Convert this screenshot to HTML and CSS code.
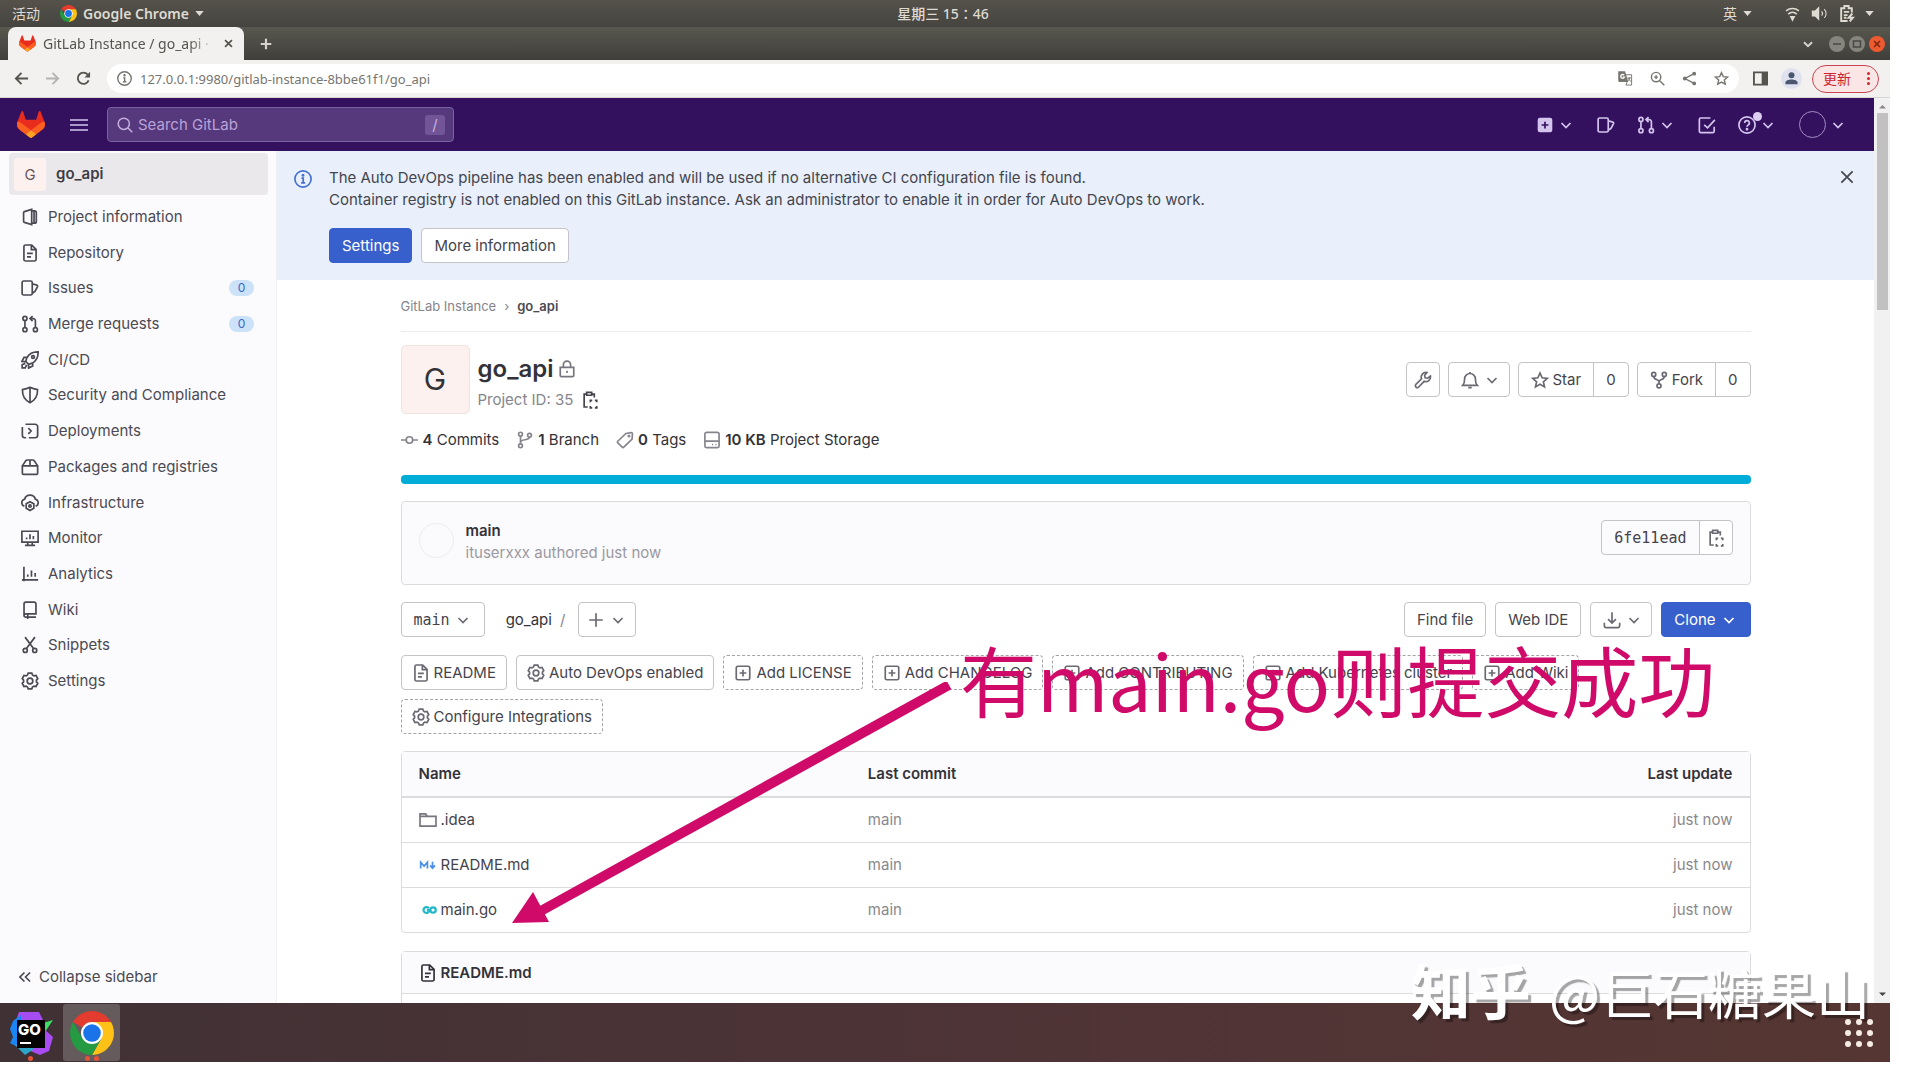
FILE: index.html
```
<!DOCTYPE html>
<html lang="zh-CN">

<head>
    <meta charset="utf-8">
    <meta name="viewport" content="width=device-width,initial-scale=1">
    <title>GitLab Instance / go_api</title>
    <link rel="stylesheet" href="styles.css">
</head>

<body>
    <!-- icon sprite -->
    <svg class="sprite" aria-hidden="true">
        <symbol id="chevron" viewBox="0 0 16 16"><path d="M4 6.2l4 4 4-4" /></symbol>
        <symbol id="close" viewBox="0 0 16 16"><path d="M3 3l10 10M13 3L3 13" /></symbol>
        <symbol id="caret" viewBox="0 0 10 6"><path d="M0 0h10L5 6z" fill="currentColor" stroke="none" /></symbol>
        <symbol id="info" viewBox="0 0 16 16"><circle cx="8" cy="8" r="7.2" /><path d="M6.6 7.3H8.2v4M6.3 11.4h3.6" /><circle cx="8" cy="4.6" r=".6" fill="currentColor" /></symbol>
        <symbol id="project" viewBox="0 0 16 16"><path d="M9.5 1.2L3 3.2a1 1 0 0 0-.7 1v7.6a1 1 0 0 0 .7 1l6.5 2zM9.5 2.5H12a1.6 1.6 0 0 1 1.6 1.6v7.8a1.6 1.6 0 0 1-1.6 1.6H9.5M11.6 2.6v10.8" /></symbol>
        <symbol id="doc" viewBox="0 0 16 16"><path d="M9.5.9H4A1.4 1.4 0 0 0 2.6 2.3v11.4A1.4 1.4 0 0 0 4 15.1h8a1.4 1.4 0 0 0 1.4-1.4V4.8zM9.2 1v4h4M5.3 8.4h5.2M5.3 11.4h3.6" /></symbol>
        <symbol id="issues" viewBox="0 0 16 16"><path d="M2.4 1.8h6.2A1.4 1.4 0 0 1 10 3.2v9.6a1.4 1.4 0 0 1-1.4 1.4H2.4A1.4 1.4 0 0 1 1 12.8V3.2a1.4 1.4 0 0 1 1.4-1.4zM10 4.2l4 1.2a1 1 0 0 1 .7 1.3L12.4 11 10 12.6" /></symbol>
        <symbol id="merge" viewBox="0 0 16 16"><circle cx="3.5" cy="3" r="1.8" /><circle cx="3.5" cy="13" r="1.8" /><circle cx="12.8" cy="13" r="1.8" /><path d="M3.5 5v6M8.4 3.2h2.4a2 2 0 0 1 2 2V11M10.3 1L8 3.2l2.3 2.2" /></symbol>
        <symbol id="rocket" viewBox="0 0 16 16"><path d="M15.2.8C10.5.6 7.6 2 5.2 6L4.2 9.2l2.6 2.6 3.2-1C14 8.4 15.4 5.5 15.2.8zM5.4 5.6H2.7L.8 9.2l3.3.2M10.4 10.6v2.7l-3.6 1.9-.2-3.3M3.8 11L1 12.2V15h2.8L5 12.2" /><circle cx="10.7" cy="5.3" r="1.2" /></symbol>
        <symbol id="shield" viewBox="0 0 16 16"><path d="M1.3 3.2C4 2.8 6 2.2 8 1.2c2 1 4 1.6 6.7 2C14.9 9 12.5 12.7 8 14.8 3.5 12.7 1.1 9 1.3 3.2zM8 1.5v13" /></symbol>
        <symbol id="deploy" viewBox="0 0 16 16"><path d="M4 2h8.6a2.200 2.200 0 0 1 2.200 2.200v7.600A2.200 2.200 0 0 1 12.600 14H7M1.200 4.500v7.300A2.200 2.200 0 0 0 3.400 14H4.500M6.500 5.500L9 8l-2.500 2.500" /></symbol>
        <symbol id="package" viewBox="0 0 16 16"><path d="M1.2 7h13.600v6.600a1 1 0 0 1-1 1H2.200a1 1 0 0 1-1-1zM1.200 7l3-4.500A1.500 1.500 0 0 1 5.500 1.800h5a1.500 1.500 0 0 1 1.300.7l3 4.500M8 2v5" /></symbol>
        <symbol id="infra" viewBox="0 0 16 16"><path d="M3 10.800A3.200 3.200 0 0 1 3.200 4.600 5 5 0 0 1 12.800 4.600 3.200 3.200 0 0 1 13 10.800M8 6.800l3.400 1.900v3.900L8 14.600l-3.400-2V8.700z" /><circle cx="8" cy="10.700" r="1" /></symbol>
        <symbol id="monitor" viewBox="0 0 16 16"><path d="M.8 2h14.400v9.600H.8zM3.500 14.500h9M6 12v2.500M10 12v2.500M5 9.200V7.600M8 9.200V4.600M11 9.200V6.200" /></symbol>
        <symbol id="chart" viewBox="0 0 16 16"><path d="M2.600 1.500v13M.8 13.200h14.400M6 10.500V8.500M9.300 10.500V4.800M12.600 10.500V7" /></symbol>
        <symbol id="book" viewBox="0 0 16 16"><path d="M13.300 11.500H4.200a1.500 1.500 0 0 0-1.500 1.500V2.600A1.600 1.600 0 0 1 4.300 1h7.400a1.600 1.600 0 0 1 1.600 1.600zM2.700 13a1.400 1.400 0 0 0 1.500 1.300h9.100M6 11.500V16" /></symbol>
        <symbol id="snippet" viewBox="0 0 16 16"><circle cx="3.800" cy="12.800" r="1.800" /><circle cx="12.200" cy="12.800" r="1.800" /><path d="M3.600 1l7.700 10.300M12.400 1L4.700 11.300" /></symbol>
        <symbol id="gear" viewBox="0 0 16 16"><path d="M6.400 1h3.200l.6 1.700 1.300.8 1.900-.4 1.500 2.700L13.700 7.200v1.600l1.200 1.400-1.500 2.700-1.900-.4-1.300.8L9.600 15H6.400l-.6-1.700-1.300-.8-1.900.4-1.500-2.700L2.300 8.800V7.200L1.100 5.800l1.500-2.700 1.900.4 1.300-.8z" /><circle cx="8" cy="8" r="2.500" /></symbol>
        <symbol id="lock" viewBox="0 0 16 16"><path d="M2 6.500h12v7.300a1 1 0 0 1-1 1H3a1 1 0 0 1-1-1zM4.800 6.300V4.200a3.200 3.200 0 0 1 6.400 0v2.100M8 9.500v2" /></symbol>
        <symbol id="copy" viewBox="0 0 16 16"><path d="M5 2.700H2.800v11.500H6M9.500 2.700h2.300v3M5 1.200h4.500v2.600H5zM8.300 10V8.300H10M12.300 8.300H14V10M14 13.300V15h-1.700M10 15H8.300v-1.700" /></symbol>
        <symbol id="commit" viewBox="0 0 16 16"><circle cx="7.500" cy="8" r="2.900" /><path d="M0 8h4.500M10.500 8H15" /></symbol>
        <symbol id="branch" viewBox="0 0 16 16"><circle cx="4" cy="2.800" r="1.700" /><circle cx="4" cy="13.200" r="1.700" /><circle cx="12" cy="3.800" r="1.700" /><path d="M4 4.500v7M12 5.500c0 3-8 1.500-8 4.500" /></symbol>
        <symbol id="tag" viewBox="0 0 16 16"><path d="M8.800 2.200l4.700-.8a1 1 0 0 1 1.100 1l-.3 4.800-7.400 7.200a1 1 0 0 1-1.400 0L1.600 10.500a1 1 0 0 1 0-1.400z" /><circle cx="11.500" cy="4.500" r=".6" /></symbol>
        <symbol id="disk" viewBox="0 0 16 16"><path d="M3 1.200h10A1.400 1.400 0 0 1 14.300 2.600v10.800a1.400 1.400 0 0 1-1.300 1.400H3a1.400 1.400 0 0 1-1.300-1.400V2.600A1.400 1.400 0 0 1 3 1.200zM1.700 9h12.600M8 12h1M11 12h1" /></symbol>
        <symbol id="wrench" viewBox="0 0 16 16"><path d="M14.600 4.500A4.200 4.200 0 0 1 9 9.200l-4.800 5a1.700 1.700 0 0 1-2.500-2.400l5-4.800A4.200 4.200 0 0 1 11.500 1.400L9.500 3.800l.4 2.300 2.300.3z" /></symbol>
        <symbol id="bell" viewBox="0 0 16 16"><path d="M1.500 12.800h13C13.300 11.500 12.800 10 12.800 7a4.800 4.800 0 0 0-9.600 0c0 3-.5 4.500-1.700 5.800zM6.500 14.800h3M8 .8v1.400" /></symbol>
        <symbol id="star" viewBox="0 0 16 16"><path d="M8 1.800l1.900 4.200 4.600.5-3.500 3.100 1 4.500L8 11.800l-4 2.300 1-4.500L1.500 6.500l4.600-.5z" /></symbol>
        <symbol id="fork" viewBox="0 0 16 16"><circle cx="3.300" cy="3" r="1.800" /><circle cx="12.700" cy="3" r="1.800" /><circle cx="8" cy="13.200" r="1.800" /><path d="M3.300 5c0 3 4.700 2 4.700 4.500M12.700 5c0 3-4.700 2-4.700 4.500v2" /></symbol>
        <symbol id="download" viewBox="0 0 16 16"><path d="M8 1v9.500M4.500 7.300L8 10.800l3.500-3.500M1.200 10.500v2.800a1.400 1.400 0 0 0 1.400 1.400h10.800a1.400 1.400 0 0 0 1.400-1.400v-2.800" /></symbol>
        <symbol id="plus" viewBox="0 0 16 16"><path d="M8 2v12M2 8h12" /></symbol>
        <symbol id="plus-box" viewBox="0 0 16 16"><rect x="2" y="2" width="12" height="12" rx="1.500" /><path d="M8 5v6M5 8h6" /></symbol>
        <symbol id="folder" viewBox="0 0 16 16"><path d="M.9 13.500V2.500h5l1.500 2.300h7.700v8.700zM1 4.800h6.500" /></symbol>
        <symbol id="todo" viewBox="0 0 16 16"><path d="M11 1.800H2.400A1.200 1.200 0 0 0 1.200 3v10.500a1.200 1.200 0 0 0 1.200 1.200h10.800a1.200 1.200 0 0 0 1.200-1.200V9.500M5.500 7.800L8.500 10.500l6.500-7" /></symbol>
        <symbol id="help" viewBox="0 0 16 16"><circle cx="8" cy="8" r="7.200" /><path d="M5.900 6.200a2.100 2.100 0 1 1 3 1.900c-.7.400-.9.700-.9 1.500" /><circle cx="8" cy="11.800" r=".5" fill="currentColor" /></symbol>
        <symbol id="search" viewBox="0 0 16 16"><circle cx="6.800" cy="6.800" r="5.600" /><path d="M11 11l4.300 4.300" /></symbol>
        <symbol id="gitlab" viewBox="0 0 25 24">
            <g stroke="none">
                <path d="m24.507 9.500-.034-.090L21.082.562a.896.896 0 0 0-1.694.091l-2.290 7.010H7.825L5.535.653a.898.898 0 0 0-1.694-.090L.451 9.411.416 9.500a6.297 6.297 0 0 0 2.090 7.278l.012.010.030.022 5.160 3.867 2.560 1.935 1.554 1.176a1.051 1.051 0 0 0 1.268 0l1.555-1.176 2.560-1.935 5.197-3.890.014-.010A6.297 6.297 0 0 0 24.507 9.500Z" fill="#e82c1e" />
                <path d="m24.507 9.500-.034-.090a11.440 11.440 0 0 0-4.560 2.051l-7.447 5.632 4.742 3.584 5.197-3.890.014-.010A6.297 6.297 0 0 0 24.507 9.500Z" fill="#fc6021" />
                <path d="m7.707 20.677 2.560 1.935 1.555 1.176a1.051 1.051 0 0 0 1.268 0l1.555-1.176 2.560-1.935-4.743-3.584-4.755 3.584Z" fill="#fca326" />
                <path d="M5.010 11.461a11.430 11.430 0 0 0-4.560-2.050L.416 9.500a6.297 6.297 0 0 0 2.090 7.278l.012.010.030.022 5.160 3.867 4.745-3.584-7.444-5.632Z" fill="#fc6021" />
            </g>
        </symbol>
        <symbol id="chrome" viewBox="0 0 44 44">
            <g stroke="none">
                <path d="M22 22L3 11A22 22 0 0 1 41 11z" fill="#e33b2e" />
                <path d="M22 11H41A22 22 0 0 1 22 44L31.500 27.500z" fill="#fdc117" />
                <path d="M3 11L12.500 27.500 22 33l9-5L22 44A22 22 0 0 1 3 11z" fill="#249a42" />
                <circle cx="22" cy="22" r="11" fill="#fff" />
                <circle cx="22" cy="22" r="8.800" fill="#1a73e8" />
            </g>
        </symbol>
    </svg>

    <div class="desktop">
        <header class="topbar">
            <div class="topbar-side">
                <span class="activities">活动</span>
                <button class="app-menu"><svg class="app-icon"><use href="#chrome" /></svg>Google Chrome<svg class="caret"><use href="#caret" /></svg></button>
            </div>
            <span class="clock">星期三 15∶46</span>
            <div class="topbar-side tray">
                <button class="lang">英<svg class="caret"><use href="#caret" /></svg></button>
                <svg class="tray-icon" viewBox="0 0 16 16"><path d="M2 5.500a9.500 9.500 0 0 1 12 0M4 8.500a6 6 0 0 1 8 0" /><path d="M6.500 11h3L8 14z" fill="currentColor" /></svg>
                <svg class="tray-icon" viewBox="0 0 16 16"><path d="M1.500 6h2.500l3-3v10L4 10H1.500z" fill="currentColor" /><path d="M10 6a3 3 0 0 1 0 4M12.500 3.800a6 6 0 0 1 0 8.400" stroke-width="1" /></svg>
                <svg class="tray-icon" viewBox="0 0 16 16"><path d="M13 7V3H10V1H6v2H3v12h6M5.500 6.500h5M5.500 9.500H9M5.500 12H8M13.500 8L10 12h4l-3 3.500" stroke-width="1.800" /></svg>
                <svg class="caret"><use href="#caret" /></svg>
            </div>
        </header>

        <div class="tabstrip">
            <div class="tab">
                <svg class="tab-icon"><use href="#gitlab" /></svg>
                <span class="tab-title">GitLab Instance / go_api ·</span>
                <button class="tab-close" aria-label="Close tab"><svg><use href="#close" /></svg></button>
            </div>
            <button class="new-tab" aria-label="New tab"><svg><use href="#plus" /></svg></button>
            <div class="window-controls">
                <svg class="tab-search"><use href="#chevron" /></svg>
                <button class="win-btn" aria-label="Minimize"><svg viewBox="0 0 16 16"><path d="M4 8h8" /></svg></button>
                <button class="win-btn" aria-label="Maximize"><svg viewBox="0 0 16 16"><path d="M4.500 5h7v6h-7z" /></svg></button>
                <button class="win-btn win-close" aria-label="Close"><svg viewBox="0 0 16 16"><path d="M5 5l6 6M11 5l-6 6" /></svg></button>
            </div>
        </div>

        <div class="toolbar">
            <button class="tool" aria-label="Back"><svg viewBox="0 0 16 16"><path d="M15 8H2M8 2L2 8l6 6" /></svg></button>
            <button class="tool off" aria-label="Forward"><svg viewBox="0 0 16 16"><path d="M1 8h13M8 2l6 6-6 6" /></svg></button>
            <button class="tool" aria-label="Reload"><svg viewBox="0 0 16 16"><path d="M13.500 10A6 6 0 1 1 12.500 3.800" /><path d="M15 .8v6H9z" fill="currentColor" stroke="none" /></svg></button>
            <div class="omnibox">
                <svg class="site-info"><use href="#info" /></svg>
                <input type="text" aria-label="Address" value="127.0.0.1:9980/gitlab-instance-8bbe61f1/go_api">
                <svg viewBox="0 0 16 16"><path d="M1 1h6l3 10H2a1 1 0 0 1-1-1z" fill="currentColor" /><path d="M8 4h6.500v11H8.500L10 11M10 7.500h4M12 6.500v1c0 2-1 3-2 3.500M11 8l3 3.500" stroke-width="1" /><path d="M6.500 4.500A2 2 0 1 0 6.800 6.500H5.300" stroke="#fff" /></svg>
                <svg viewBox="0 0 16 16"><circle cx="6.500" cy="6.500" r="5" /><path d="M10.300 10.300l5 5M6.500 4.500v4M4.500 6.500h4" /></svg>
                <svg viewBox="0 0 16 16"><g fill="currentColor"><circle cx="3" cy="8" r="1.300" /><circle cx="13" cy="2.800" r="1.300" /><circle cx="13" cy="13.200" r="1.300" /></g><path d="M13 2.800L3 8l10 5.200" /></svg>
                <svg><use href="#star" /></svg>
            </div>
            <svg class="panel-icon" viewBox="0 0 16 16"><path d="M1 1.500h14v13H1z" stroke-width="2" /><path d="M10 2h5v12h-5z" fill="currentColor" /></svg>
            <span class="profile"><svg viewBox="0 0 16 16"><g fill="currentColor" stroke="none"><circle cx="8" cy="4.500" r="3.200" /><path d="M1.500 14v-1.500C1.500 10 5 9 8 9s6.500 1 6.500 3.500V14z" /></g></svg></span>
            <button class="update">更新<span class="dots"><i></i><i></i><i></i></span></button>
        </div>

        <div class="viewport">
            <div class="page">
                <nav class="navbar">
                    <a href="#" class="brand" aria-label="GitLab"><svg><use href="#gitlab" /></svg></a>
                    <button class="burger" aria-label="Menu"><svg viewBox="0 0 18 16"><path d="M0 3h18M0 8h18M0 13h18" /></svg></button>
                    <label class="search">
                        <svg><use href="#search" /></svg>
                        <input type="text" placeholder="Search GitLab" aria-label="Search GitLab">
                        <kbd>/</kbd>
                    </label>
                    <div class="nav-actions">
                        <button aria-label="Create new"><svg viewBox="0 0 16 16"><rect x="1.500" y="1.500" width="13" height="13" rx="2" fill="currentColor" stroke="none" /><path d="M8 5v6M5 8h6" stroke="#33115f" /></svg><svg class="chev"><use href="#chevron" /></svg></button>
                        <button aria-label="Issues"><svg><use href="#issues" /></svg></button>
                        <button aria-label="Merge requests"><svg><use href="#merge" /></svg><svg class="chev"><use href="#chevron" /></svg></button>
                        <button aria-label="To-Do List"><svg><use href="#todo" /></svg></button>
                        <button class="help" aria-label="Help"><svg><use href="#help" /></svg><svg class="chev"><use href="#chevron" /></svg></button>
                        <button aria-label="Account"><span class="user"></span><svg class="chev"><use href="#chevron" /></svg></button>
                    </div>
                </nav>

                <div class="columns">
                    <aside class="sidebar">
                        <a href="#" class="context"><span class="avatar-small">G</span>go_api</a>
                        <ul class="menu">
                            <li><a href="#"><svg><use href="#project" /></svg>Project information</a></li>
                            <li><a href="#"><svg><use href="#doc" /></svg>Repository</a></li>
                            <li><a href="#"><svg><use href="#issues" /></svg>Issues<span class="badge">0</span></a></li>
                            <li><a href="#"><svg><use href="#merge" /></svg>Merge requests<span class="badge">0</span></a></li>
                            <li><a href="#"><svg><use href="#rocket" /></svg>CI/CD</a></li>
                            <li><a href="#"><svg><use href="#shield" /></svg>Security and Compliance</a></li>
                            <li><a href="#"><svg><use href="#deploy" /></svg>Deployments</a></li>
                            <li><a href="#"><svg><use href="#package" /></svg>Packages and registries</a></li>
                            <li><a href="#"><svg><use href="#infra" /></svg>Infrastructure</a></li>
                            <li><a href="#"><svg><use href="#monitor" /></svg>Monitor</a></li>
                            <li><a href="#"><svg><use href="#chart" /></svg>Analytics</a></li>
                            <li><a href="#"><svg><use href="#book" /></svg>Wiki</a></li>
                            <li><a href="#"><svg><use href="#snippet" /></svg>Snippets</a></li>
                            <li><a href="#"><svg><use href="#gear" /></svg>Settings</a></li>
                        </ul>
                        <button class="collapse"><svg viewBox="0 0 16 16"><path d="M7.500 4L3.500 8l4 4M12.500 4l-4 4 4 4" /></svg>Collapse sidebar</button>
                    </aside>

                    <main class="main">
                        <section class="alert">
                            <svg class="alert-icon"><use href="#info" /></svg>
                            <div class="alert-body">
                                <p>The Auto DevOps pipeline has been enabled and will be used if no alternative CI configuration file is found.<br>Container registry is not enabled on this GitLab instance. Ask an administrator to enable it in order for Auto DevOps to work.</p>
                                <div class="alert-actions">
                                    <button class="btn btn-primary">Settings</button>
                                    <button class="btn">More information</button>
                                </div>
                            </div>
                            <button class="alert-close" aria-label="Dismiss"><svg><use href="#close" /></svg></button>
                        </section>

                        <div class="container">
                            <div class="breadcrumb"><a href="#">GitLab Instance</a><span class="sep">›</span><a href="#" class="current">go_api</a></div>

                            <div class="project">
                                <span class="avatar">G</span>
                                <div class="project-name">
                                    <h1>go_api<svg><use href="#lock" /></svg></h1>
                                    <p>Project ID: 35<svg><use href="#copy" /></svg></p>
                                </div>
                                <div class="project-actions">
                                    <button class="btn btn-icon" aria-label="Admin"><svg><use href="#wrench" /></svg></button>
                                    <button class="btn btn-menu" aria-label="Notifications"><svg><use href="#bell" /></svg><svg class="chev"><use href="#chevron" /></svg></button>
                                    <div class="group"><button class="btn"><svg><use href="#star" /></svg>Star</button><a href="#" class="btn">0</a></div>
                                    <div class="group"><button class="btn"><svg><use href="#fork" /></svg>Fork</button><a href="#" class="btn">0</a></div>
                                </div>
                            </div>

                            <div class="stats">
                                <a href="#"><svg><use href="#commit" /></svg><span><b>4</b> Commits</span></a>
                                <a href="#"><svg><use href="#branch" /></svg><span><b>1</b> Branch</span></a>
                                <a href="#"><svg><use href="#tag" /></svg><span><b>0</b> Tags</span></a>
                                <a href="#"><svg><use href="#disk" /></svg><span><b>10 KB</b> Project Storage</span></a>
                            </div>

                            <div class="lang-bar"></div>

                            <div class="commit">
                                <span class="commit-avatar"></span>
                                <div class="commit-text">
                                    <a href="#">main</a>
                                    <p>ituserxxx authored just now</p>
                                </div>
                                <div class="group sha"><span class="btn">6fe11ead</span><button class="btn" aria-label="Copy commit SHA"><svg><use href="#copy" /></svg></button></div>
                            </div>

                            <div class="tree-nav">
                                <button class="btn mono">main<svg class="chev"><use href="#chevron" /></svg></button>
                                <a href="#" class="path">go_api</a><span class="slash">/</span>
                                <button class="btn btn-add" aria-label="Add to tree"><svg><use href="#plus" /></svg><svg class="chev"><use href="#chevron" /></svg></button>
                                <div class="tree-actions">
                                    <button class="btn">Find file</button>
                                    <button class="btn">Web IDE</button>
                                    <button class="btn btn-menu" aria-label="Download"><svg><use href="#download" /></svg><svg class="chev"><use href="#chevron" /></svg></button>
                                    <button class="btn btn-primary">Clone<svg class="chev"><use href="#chevron" /></svg></button>
                                </div>
                            </div>

                            <div class="chips">
                                <a href="#" class="btn"><svg><use href="#doc" /></svg>README</a>
                                <a href="#" class="btn"><svg><use href="#gear" /></svg>Auto DevOps enabled</a>
                                <a href="#" class="btn dashed"><svg><use href="#plus-box" /></svg>Add LICENSE</a>
                                <a href="#" class="btn dashed"><svg><use href="#plus-box" /></svg>Add CHANGELOG</a>
                                <a href="#" class="btn dashed"><svg><use href="#plus-box" /></svg>Add CONTRIBUTING</a>
                                <a href="#" class="btn dashed"><svg><use href="#plus-box" /></svg>Add Kubernetes cluster</a>
                                <a href="#" class="btn dashed"><svg><use href="#plus-box" /></svg>Add Wiki</a>
                                <a href="#" class="btn dashed"><svg><use href="#gear" /></svg>Configure Integrations</a>
                            </div>

                            <div class="files">
                                <table>
                                    <thead>
                                        <tr>
                                            <th>Name</th>
                                            <th>Last commit</th>
                                            <th>Last update</th>
                                        </tr>
                                    </thead>
                                    <tbody>
                                        <tr>
                                            <td><a href="#"><svg><use href="#folder" /></svg>.idea</a></td>
                                            <td>main</td>
                                            <td>just now</td>
                                        </tr>
                                        <tr>
                                            <td><a href="#"><svg class="md" viewBox="0 0 16 16"><path d="M1.500 11V5.500L4.500 9l3-3.500V11M12 5v5M9.800 8.300L12 10.800l2.200-2.500" /></svg>README.md</a></td>
                                            <td>main</td>
                                            <td>just now</td>
                                        </tr>
                                        <tr>
                                            <td><a href="#"><svg class="go" viewBox="0 0 16 16"><path d="M8.800 6.600A2.600 2.600 0 1 0 9 9V8H7" /><circle cx="12.500" cy="8" r="2.400" /></svg>main.go</a></td>
                                            <td>main</td>
                                            <td>just now</td>
                                        </tr>
                                    </tbody>
                                </table>
                            </div>

                            <div class="readme">
                                <div class="readme-title"><svg><use href="#doc" /></svg>README.md</div>
                            </div>
                        </div>
                    </main>
                </div>
            </div>
            <div class="scrollbar">
                <svg viewBox="0 0 10 6"><path d="M0 6h10L5 1z" /></svg>
                <div class="thumb"></div>
                <svg class="down" viewBox="0 0 10 6"><path d="M0 0h10L5 5z" /></svg>
            </div>
        </div>

        <footer class="dock">
            <button class="dock-app" aria-label="GoLand">
                <svg viewBox="0 0 44 44">
                    <path d="M10 1h20l6 12-14 12L4 18z" fill="#a54df0" />
                    <path d="M4 10l8-6v34L1 32l3-6-3-8z" fill="#1b86f3" />
                    <path d="M44 9L34 24l-3-11z" fill="#3ddc68" />
                    <path d="M34 17l10 9-4 14-9 4-12-5 6-8z" fill="#a94bf2" />
                    <path d="M6 34l14-2 5 6-9 6z" fill="#2ea6c9" />
                    <path d="M8 9h28v28H8z" fill="#050505" />
                    <path d="M11 32h11" stroke="#fff" stroke-width="2" />
                    <text x="9" y="24" class="go-text">GO</text>
                </svg>
                <span class="running"><i></i></span>
            </button>
            <button class="dock-app active" aria-label="Google Chrome">
                <svg><use href="#chrome" /></svg>
                <span class="running"><i></i><i></i></span>
            </button>
            <button class="apps" aria-label="Show applications"><svg viewBox="0 0 28 28"><path d="M3 3h.01M14 3h.01M25 3h.01M3 14h.01M14 14h.01M25 14h.01M3 25h.01M14 25h.01M25 25h.01" /></svg></button>
        </footer>

        <!-- annotation over the page -->
        <svg class="arrow" viewBox="0 0 440 242"><path d="M437 3L27 230" /><path d="M0 241L21 210 37 240z" class="arrow-head" /></svg>
        <div class="note">有main.go则提交成功</div>
        <div class="watermark"><b>知乎</b> @巨石糖果山</div>
    </div>
</body>

</html>
```
FILE: styles.css
```
* {
    margin: 0;
    padding: 0;
    box-sizing: border-box;
}

body {
    font-family: Inter, "Noto Sans CJK SC", sans-serif;
    font-size: 15px;
    line-height: 22px;
    color: #333238;
    background: #fff;
}

button,
input {
    font: inherit;
    color: inherit;
    background: none;
    border: none;
    outline: none;
}

a {
    color: inherit;
    text-decoration: none;
}

ul {
    list-style: none;
}

svg {
    width: 18px;
    height: 18px;
    flex: none;
    fill: none;
    stroke: currentColor;
    stroke-width: 1.5;
}

.sprite {
    display: none;
}

.desktop {
    position: relative;
    display: flex;
    flex-direction: column;
    height: calc(100vh - 13px);
    margin-right: 30px;
    overflow: hidden;
}

/* system bar */
.topbar {
    display: flex;
    align-items: center;
    height: 27px;
    padding: 0 16px 0 12px;
    color: #dfdbd2;
    font-family: "Noto Sans", "Noto Sans CJK SC", sans-serif;
    font-size: 14px;
    background: linear-gradient(#55524a, #454440);
}

.topbar-side {
    flex: 1;
    display: flex;
    align-items: center;
    gap: 20px;
}

.topbar button {
    display: flex;
    align-items: center;
    gap: 6px;
}

.app-menu {
    font-weight: 600;
}

.app-icon {
    width: 17px;
    height: 17px;
}

.caret {
    width: 9px;
    height: 5px;
}

.clock {
    font-weight: 500;
}

.tray {
    justify-content: flex-end;
    gap: 10px;
}

.topbar .lang {
    margin-right: 22px;
}

.tray-icon {
    width: 17px;
    height: 17px;
}

/* browser chrome */
.tabstrip {
    display: flex;
    align-items: center;
    height: 33px;
    padding: 0 5px 0 8px;
    color: #d5d3cc;
    font-family: "Noto Sans", sans-serif;
    font-size: 14px;
    background: linear-gradient(#59584e, #3f3e3a);
}

.tab {
    display: flex;
    align-items: center;
    align-self: stretch;
    width: 236px;
    padding: 0 10px 0 11px;
    color: #55544f;
    background: #f2f1f0;
    border-radius: 8px 8px 0 0;
}

.tab-icon {
    width: 17px;
    height: 17px;
    margin-right: 7px;
}

.tab-title {
    flex: 1;
    overflow: hidden;
    white-space: nowrap;
    mask-image: linear-gradient(90deg, #000 85%, transparent);
}

.tab-close {
    display: flex;
    margin-left: 8px;
}

.tab-close svg {
    width: 11px;
    height: 11px;
    stroke-width: 2.5;
}

.new-tab {
    display: flex;
    margin-left: 15px;
}

.new-tab svg {
    width: 14px;
    height: 14px;
    stroke-width: 2.5;
}

.window-controls {
    display: flex;
    align-items: center;
    gap: 4px;
    margin-left: auto;
}

.window-controls svg {
    width: 16px;
    height: 16px;
}

.tab-search {
    margin-right: 9px;
    stroke-width: 2;
}

.win-btn {
    display: flex;
    border-radius: 50%;
    color: #4a4945;
    background: #85847d;
}

.win-close {
    color: #7b2510;
    background: #ee5a30;
}

.toolbar {
    display: flex;
    align-items: center;
    height: 38px;
    padding: 0 11px 0 14px;
    color: #55544f;
    background: #f2f1f0;
    border-bottom: 1px solid #d8d6d3;
    font-family: "Noto Sans", "Noto Sans CJK SC", sans-serif;
    font-size: 14px;
}

.tool {
    display: flex;
    margin-right: 16px;
}

.tool svg {
    width: 15px;
    height: 15px;
    stroke-width: 2;
}

.tool.off {
    color: #b5b3b0;
}

.omnibox {
    flex: 1;
    display: flex;
    align-items: center;
    gap: 17px;
    height: 29px;
    margin-right: 14px;
    padding: 0 10px;
    color: #77756f;
    background: #fff;
    border-radius: 15px;
}

.omnibox svg {
    width: 15px;
    height: 15px;
}

.omnibox .site-info {
    margin-right: -9px;
}

.omnibox input {
    flex: 1;
    min-width: 0;
    font-size: 13px;
}

.panel-icon {
    width: 15px;
    height: 15px;
    margin-right: 13px;
}

.profile {
    display: flex;
    padding: 3px;
    color: #4a5670;
    background: #dfe2ee;
    border-radius: 50%;
    margin-right: 10px;
}

.profile svg {
    width: 15px;
    height: 15px;
}

.update {
    display: flex;
    align-items: center;
    gap: 16px;
    height: 28px;
    padding: 0 8px 0 10px;
    color: #cc2430;
    background: #fbe6e6;
    border: 1px solid #cc4450;
    border-radius: 14px;
}

.dots {
    display: grid;
    gap: 2px;
}

.dots i {
    width: 3px;
    height: 3px;
    border-radius: 50%;
    background: #cc2430;
}

/* page area */
.viewport {
    flex: 1;
    display: flex;
    min-height: 0;
}

.page {
    flex: 1;
    display: flex;
    flex-direction: column;
    min-width: 0;
}

.scrollbar {
    display: flex;
    flex-direction: column;
    align-items: center;
    width: 16px;
    padding: 6px 0;
    background: #f1f1f1;
}

.scrollbar svg {
    width: 7px;
    height: 5px;
    fill: #8a8a8a;
    stroke: none;
}

.scrollbar .thumb {
    width: 11px;
    height: 197px;
    margin-top: 4px;
    background: #c1c1c1;
}

.scrollbar .down {
    margin-top: auto;
    fill: #444;
}

.navbar {
    display: flex;
    align-items: center;
    height: 53px;
    padding: 0 27px 0 17px;
    color: #d4c5ee;
    background: #33115f;
    flex: none;
}

.brand {
    display: flex;
}

.brand svg {
    width: 28px;
    height: 27px;
}

.burger {
    display: flex;
    margin: 0 19px 0 25px;
}

.search {
    display: flex;
    align-items: center;
    gap: 5px;
    width: 347px;
    height: 35px;
    padding: 0 8px 0 9px;
    color: #c5b0e0;
    background: #56387d;
    border: 1px solid #7a61a0;
    border-radius: 4px;
}

.search svg {
    width: 16px;
    height: 16px;
}

.search input {
    flex: 1;
    min-width: 0;
}

.search input::placeholder {
    color: #b9a3d6;
}

.search kbd {
    width: 20px;
    height: 20px;
    line-height: 20px;
    text-align: center;
    font-family: inherit;
    background: #725596;
    border-radius: 3px;
}

.nav-actions {
    display: flex;
    align-items: center;
    gap: 22px;
    margin-left: auto;
}

.nav-actions button {
    position: relative;
    display: flex;
    align-items: center;
    gap: 3px;
}

.help::after {
    content: "";
    position: absolute;
    top: -4px;
    left: 15px;
    width: 9px;
    height: 9px;
    border-radius: 50%;
    background: #dccff2;
}

.user {
    width: 27px;
    height: 27px;
    border: 1px solid #a48fc4;
    border-radius: 50%;
}

.columns {
    flex: 1;
    display: flex;
    min-height: 0;
}

/* sidebar */
.sidebar {
    display: flex;
    flex-direction: column;
    width: 277px;
    padding: 2px 8px 0 9px;
    color: #4b4a52;
    background: #fbfafd;
    border-right: 1px solid #f0eff3;
}

.context {
    display: flex;
    align-items: center;
    gap: 10px;
    height: 42px;
    padding: 0 5px;
    font-weight: 600;
    color: #3d3c44;
    background: #eae8eb;
    border-radius: 4px;
}

.avatar-small {
    width: 32px;
    height: 33px;
    line-height: 33px;
    text-align: center;
    font-weight: 400;
    color: #66555a;
    background: #fcf1ef;
    border-radius: 3px;
}

.menu {
    display: flex;
    flex-direction: column;
    height: 500px;
    margin-top: 4px;
}

.menu li {
    flex: 1;
    display: flex;
}

.menu a {
    flex: 1;
    display: flex;
    align-items: center;
    gap: 9px;
    padding: 0 14px 0 12px;
}

.badge {
    width: 25px;
    height: 16px;
    margin-left: auto;
    line-height: 16px;
    text-align: center;
    font-size: 12px;
    color: #3a66c4;
    background: #cbe2f9;
    border-radius: 8px;
}

.collapse {
    display: flex;
    align-items: center;
    gap: 5px;
    margin-top: auto;
    padding: 0 7px 15px;
}

/* main column */
.main {
    flex: 1;
    min-width: 0;
    overflow: hidden;
}

.alert {
    display: flex;
    align-items: flex-start;
    padding: 16px 18px 17px 17px;
    color: #45454d;
    background: #e9f0fb;
}

.alert-icon {
    margin: 3px 17px 0 0;
    color: #4670d0;
}

.alert-body {
    flex: 1;
}

.alert-actions {
    display: flex;
    gap: 9px;
    margin-top: 17px;
}

.alert-close {
    display: flex;
    margin-top: 1px;
}

.btn {
    display: flex;
    align-items: center;
    justify-content: center;
    gap: 4px;
    height: 35px;
    padding: 0 12px;
    white-space: nowrap;
    color: #45444c;
    background: #fff;
    border: 1px solid #c4c3c8;
    border-radius: 4px;
}

.btn svg {
    color: #6b6a73;
}

.btn-icon,
.sha .btn:last-child {
    padding: 0 7px;
}

.btn-menu {
    padding: 0 8px 0 12px;
}

.btn-add {
    padding: 0 8px;
}

.btn.btn-primary,
.btn-primary svg {
    color: #fff;
}

.btn.btn-primary {
    background: #3860cc;
    border-color: #3860cc;
}

.mono,
.sha span.btn {
    font-family: "DejaVu Sans Mono", monospace;
}

.group {
    display: flex;
}

.group .btn:first-child {
    border-radius: 4px 0 0 4px;
}

.group .btn:last-child {
    margin-left: -1px;
    border-radius: 0 4px 4px 0;
}

.container {
    max-width: 1350px;
    margin: 0 auto;
}

.breadcrumb {
    display: flex;
    align-items: center;
    height: 52px;
    font-size: 13px;
    color: #86858d;
    border-bottom: 1px solid #ececef;
}

.breadcrumb .sep {
    margin: 0 8px;
}

.breadcrumb .current {
    font-weight: 600;
    color: #4b4a52;
}

.project {
    display: flex;
    margin-top: 13px;
}

.avatar {
    width: 69px;
    height: 69px;
    line-height: 67px;
    text-align: center;
    font-size: 30px;
    background: #fcf1ef;
    border: 1px solid #f0e2e1;
    border-radius: 5px;
}

.project-name {
    flex: 1;
    margin-left: 8px;
}

.project-name h1 {
    display: flex;
    align-items: center;
    gap: 5px;
    margin-top: 8px;
    font-size: 24px;
    font-weight: 600;
    line-height: 32px;
}

.project-name p {
    display: flex;
    align-items: center;
    gap: 8px;
    margin-top: 4px;
    color: #86858d;
}

.project-name svg {
    color: #77767e;
}

.project-name p svg {
    color: #45444c;
}

.project-actions {
    display: flex;
    gap: 8px;
    margin-top: 17px;
}

.stats {
    display: flex;
    gap: 17px;
    margin-top: 15px;
    color: #333238;
}

.stats a {
    display: flex;
    align-items: center;
    gap: 4px;
}

.stats b {
    font-weight: 600;
}

.stats svg {
    color: #86858d;
}

.lang-bar {
    height: 9px;
    margin-top: 24px;
    background: #00add8;
    border-radius: 4px;
}

.commit {
    display: flex;
    align-items: flex-start;
    height: 84px;
    margin-top: 17px;
    padding: 18px 17px;
    background: #fbfafd;
    border: 1px solid #dcdcde;
    border-radius: 4px;
}

.commit-avatar {
    width: 35px;
    height: 35px;
    margin-top: 3px;
    border: 1px solid #ececef;
    border-radius: 50%;
}

.commit-text {
    flex: 1;
    margin-left: 12px;
    color: #9a99a1;
}

.commit-text a {
    font-weight: 600;
    color: #333238;
}

.sha span.btn {
    background: #fbfafd;
}

.tree-nav {
    display: flex;
    align-items: center;
    margin-top: 17px;
}

.path {
    margin-left: 21px;
}

.slash {
    margin: 0 13px 0 8px;
    color: #86858d;
}

.tree-actions {
    display: flex;
    gap: 9px;
    margin-left: auto;
}

.chips {
    display: flex;
    flex-wrap: wrap;
    gap: 9px;
    margin-top: 18px;
}

.chips .btn {
    padding: 0 10px;
}

.chips .dashed {
    border-style: dashed;
    border-color: #a4a3a8;
}

.files {
    margin-top: 17px;
    border: 1px solid #dcdcde;
    border-radius: 4px;
}

.files table {
    width: 100%;
    table-layout: fixed;
    border-collapse: collapse;
}

.files th,
.files td {
    height: 45px;
    padding: 0 17px;
    text-align: left;
    border-bottom: 1px solid #dcdcde;
}

.files th {
    font-weight: 600;
    background: #fbfafd;
    border-bottom-width: 2px;
}

.files tr:last-child td {
    border-bottom: none;
}

.files td {
    color: #89888d;
}

.files th:last-child,
.files td:last-child {
    text-align: right;
}

.files td a {
    display: flex;
    align-items: center;
    gap: 4px;
    color: #45444c;
}

.files td svg {
    color: #77767e;
}

.files .md {
    color: #4a8fe8;
}

.files .go {
    color: #22b8c8;
    stroke-width: 2;
}

.readme {
    height: 200px;
    margin-top: 18px;
    border: 1px solid #dcdcde;
    border-radius: 4px;
}

.readme-title {
    display: flex;
    align-items: center;
    gap: 4px;
    height: 42px;
    padding: 0 17px;
    font-weight: 600;
    background: #fbfafd;
    border-bottom: 1px solid #dcdcde;
}

/* dock */
.dock {
    display: flex;
    align-items: center;
    gap: 4px;
    height: 59px;
    padding: 0 17px 0 2px;
    background: linear-gradient(90deg, #403135, #503436 60%, #553632);
}

.dock-app {
    position: relative;
    display: flex;
    align-items: center;
    justify-content: center;
    width: 57px;
    height: 57px;
    border-radius: 3px;
}

.dock-app.active {
    background: #655a5c;
}

.dock-app svg {
    width: 44px;
    height: 44px;
    stroke: none;
}

.go-text {
    fill: #fff;
    font-size: 15px;
    font-weight: 800;
}

.running {
    position: absolute;
    left: 0;
    right: 0;
    bottom: 0;
    display: flex;
    justify-content: center;
    gap: 4px;
}

.running i {
    width: 5px;
    height: 5px;
    border-radius: 50%;
    background: #e2543a;
}

.apps {
    display: flex;
    margin-left: auto;
}

.apps svg {
    width: 28px;
    height: 28px;
    color: #f6ece6;
    stroke-width: 6;
    stroke-linecap: round;
}

/* overlays */
.arrow {
    position: absolute;
    left: 512px;
    top: 682px;
    width: 440px;
    height: 242px;
    stroke: #cf0a68;
    stroke-width: 10;
}

.arrow-head {
    fill: #cf0a68;
    stroke: none;
}

.note {
    position: absolute;
    left: 960px;
    top: 624px;
    font-family: "Noto Sans CJK SC", sans-serif;
    font-size: 77px;
    line-height: 110px;
    white-space: nowrap;
    color: #cf0a68;
}

.watermark {
    position: absolute;
    right: 20px;
    bottom: 32px;
    font-family: "Noto Sans CJK SC", sans-serif;
    font-size: 54px;
    line-height: 76px;
    white-space: nowrap;
    color: #fff;
    text-shadow: 3px 3px 1px rgba(0, 0, 0, .35);
}

.watermark b {
    margin-right: 6px;
    font-size: 60px;
}
```
